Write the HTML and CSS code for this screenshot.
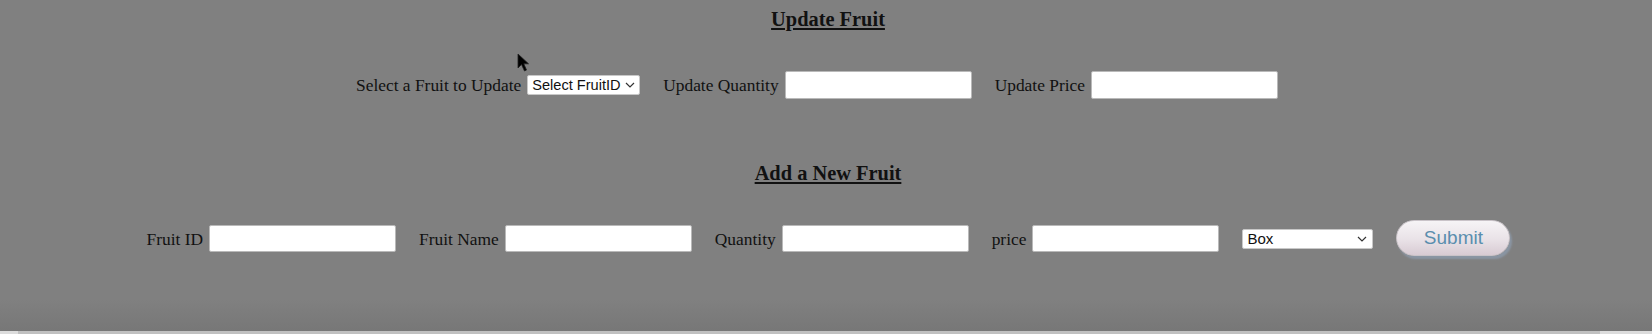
FILE: index.html
```html
<!DOCTYPE html>
<html lang="en">
<head>
<meta charset="utf-8">
<title>Fruits</title>
<link rel="stylesheet" href="styles.css">
</head>
<body>
<main class="page">
  <section class="block block-update">
    <h3 class="title">Update Fruit</h3>
    <form class="row row-update">
      <label class="field">
        <span class="lbl">Select a Fruit to Update</span>
        <span class="sel-wrap sel-id">
          <select class="sel"><option>Select FruitID</option></select>
          <svg class="chev" width="10" height="6" viewBox="0 0 10 6"><path d="M1 1l4 4 4-4" fill="none" stroke="#333" stroke-width="1.2"/></svg>
        </span>
      </label>
      <label class="field">
        <span class="lbl">Update Quantity</span>
        <input class="txt" type="text">
      </label>
      <label class="field">
        <span class="lbl">Update Price</span>
        <input class="txt" type="text">
      </label>
    </form>
  </section>
  <section class="block block-add">
    <h3 class="title">Add a New Fruit</h3>
    <form class="row row-add">
      <label class="field">
        <span class="lbl">Fruit ID</span>
        <input class="txt" type="text">
      </label>
      <label class="field">
        <span class="lbl">Fruit Name</span>
        <input class="txt" type="text">
      </label>
      <label class="field">
        <span class="lbl">Quantity</span>
        <input class="txt" type="text">
      </label>
      <label class="field">
        <span class="lbl">price</span>
        <input class="txt" type="text">
      </label>
      <span class="sel-wrap sel-unit">
        <select class="sel"><option>Box</option></select>
        <svg class="chev" width="10" height="6" viewBox="0 0 10 6"><path d="M1 1l4 4 4-4" fill="none" stroke="#333" stroke-width="1.2"/></svg>
      </span>
      <button class="btn" type="button">Submit</button>
    </form>
  </section>
</main>
<div class="bottom-bar"><span class="bar-end bar-left"></span><span class="bar-end bar-right"></span></div>
<svg class="cursor" width="14" height="20" viewBox="0 0 14 20"><path d="M1 1 L1 15 L4.5 11.5 L7.5 18 L9.5 17 L6.8 10.8 L11.5 10.8 Z" fill="#000" stroke="#222" stroke-width="0.8"/></svg>
</body>
</html>
```
FILE: styles.css
```css
html, body {
  margin: 0;
  padding: 0;
}
body {
  width: 1652px;
  height: 334px;
  overflow: hidden;
  position: relative;
  background: linear-gradient(to bottom, #808080 0px, #808080 300px, #777777 331px);
  font-family: "Liberation Serif", "Times New Roman", serif;
  color: #111;
}
.page {
  display: flex;
  flex-direction: column;
}
.title {
  margin: 7px 0 0;
  font-size: 20.4px;
  line-height: 24px;
  font-weight: bold;
  text-decoration: underline;
  text-underline-offset: 2px;
  text-align: center;
  color: #111;
  padding-left: 4px;
}
.block-add .title {
  margin-top: 62px;
  padding-left: 4px;
}
.row {
  display: flex;
  justify-content: center;
  align-items: center;
  gap: 23px;
  margin: 0;
}
.row-update {
  margin-top: 40px;
  height: 28px;
  padding-right: 18px;
}
.row-add {
  margin-top: 35px;
  height: 37px;
  padding-left: 5px;
}
.field {
  display: flex;
  align-items: center;
  gap: 6px;
}
.lbl {
  font-size: 17.4px;
  line-height: 20px;
  white-space: nowrap;
}
.txt {
  box-sizing: border-box;
  width: 187px;
  height: 27px;
  margin: 0;
  border: 1px solid #b9b9b9;
  border-radius: 2px;
  background: #fff;
  padding: 0 4px;
}
.row-update .txt {
  height: 28px;
}
.sel-wrap {
  position: relative;
  display: inline-flex;
}
.sel {
  appearance: none;
  -webkit-appearance: none;
  box-sizing: border-box;
  height: 20px;
  margin: 0;
  border: 1px solid #c8c8c8;
  border-radius: 2px;
  background: #fff;
  font-family: "Liberation Sans", Arial, sans-serif;
  font-size: 15px;
  line-height: 18px;
  color: #111;
  padding: 0 14px 0 4px;
}
.sel-id .sel {
  width: 113px;
  font-size: 14.6px;
  padding-right: 12px;
}
.sel-unit .sel {
  width: 131px;
}
.chev {
  position: absolute;
  right: 6px;
  top: 7px;
  pointer-events: none;
}
.sel-id .chev {
  right: 5px;
}
.btn {
  box-sizing: border-box;
  width: 114px;
  height: 36px;
  margin: 0 0 1px 0;
  border: 1px solid #c9c3c8;
  border-radius: 18px;
  background: linear-gradient(to bottom, #f6f4f6 0%, #e9e2e7 55%, #d8cbd3 100%);
  box-shadow: 2px 3px 2px #8a95a3;
  font-family: "Liberation Sans", Arial, sans-serif;
  font-size: 19px;
  color: #5a8eae;
  padding: 0;
}
.bottom-bar {
  position: absolute;
  left: 0;
  right: 0;
  bottom: 0;
  height: 3px;
  background: #c0c0c0;
}
.bar-end {
  position: absolute;
  top: 0;
  height: 3px;
  background: #dcdcdc;
}
.bar-left {
  left: 0;
  width: 18px;
}
.bar-right {
  right: 0;
  width: 52px;
}
.cursor {
  position: absolute;
  left: 517px;
  top: 53px;
}
```
